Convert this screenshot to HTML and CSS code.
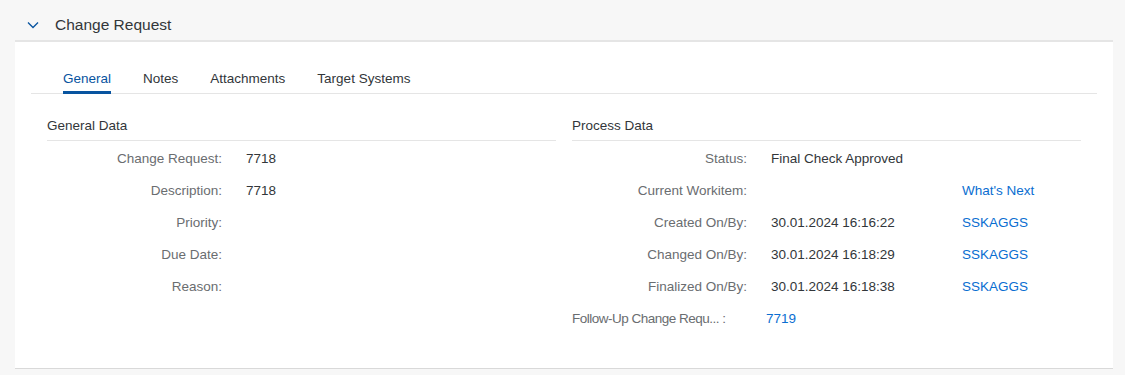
FILE: index.html
```html
<!DOCTYPE html>
<html lang="en">
<head>
    <meta charset="UTF-8">
    <meta name="viewport" content="width=device-width, initial-scale=1.0">
    <title>Change Request</title>
    <link rel="stylesheet" href="styles.css">
</head>
<body>
    <div class="section">
        <div class="section-header">
            <svg class="chevron" width="12" height="8" viewBox="0 0 12 8">
                <path d="M1 1.5 L6 6.5 L11 1.5" fill="none" stroke="#0854a0" stroke-width="1.3"/>
            </svg>
            <span class="section-title">Change Request</span>
        </div>

        <div class="panel">
            <div class="tabs">
                <div class="tab active">General</div>
                <div class="tab">Notes</div>
                <div class="tab">Attachments</div>
                <div class="tab">Target Systems</div>
            </div>

            <div class="columns">
                <div class="group">
                    <div class="group-title">General Data</div>
                    <div class="row">
                        <span class="label">Change Request:</span>
                        <span class="value">7718</span>
                    </div>
                    <div class="row">
                        <span class="label">Description:</span>
                        <span class="value">7718</span>
                    </div>
                    <div class="row">
                        <span class="label">Priority:</span>
                    </div>
                    <div class="row">
                        <span class="label">Due Date:</span>
                    </div>
                    <div class="row">
                        <span class="label">Reason:</span>
                    </div>
                </div>

                <div class="group">
                    <div class="group-title">Process Data</div>
                    <div class="row">
                        <span class="label">Status:</span>
                        <span class="value">Final Check Approved</span>
                    </div>
                    <div class="row">
                        <span class="label">Current Workitem:</span>
                        <span class="value"></span>
                        <a class="link" href="#">What's Next</a>
                    </div>
                    <div class="row">
                        <span class="label">Created On/By:</span>
                        <span class="value">30.01.2024 16:16:22</span>
                        <a class="link" href="#">SSKAGGS</a>
                    </div>
                    <div class="row">
                        <span class="label">Changed On/By:</span>
                        <span class="value">30.01.2024 16:18:29</span>
                        <a class="link" href="#">SSKAGGS</a>
                    </div>
                    <div class="row">
                        <span class="label">Finalized On/By:</span>
                        <span class="value">30.01.2024 16:18:38</span>
                        <a class="link" href="#">SSKAGGS</a>
                    </div>
                    <div class="row">
                        <span class="label label-left">Follow-Up Change Requ... :</span>
                        <a class="link" href="#">7719</a>
                    </div>
                </div>
            </div>
        </div>
    </div>
</body>
</html>
```

FILE: styles.css
```css
body {
    margin: 0;
    background-color: #f7f7f7;
    font-family: "Liberation Sans", Arial, sans-serif;
    font-size: 13.5px;
    color: #32363a;
}

.section {
    padding: 0 12px 0 15px;
}

.section-header {
    display: flex;
    align-items: center;
    height: 30px;
    padding-top: 10px;
}

.chevron {
    margin-left: 12px;
    margin-right: 16px;
}

.section-title {
    font-size: 15.5px;
    color: #32363a;
}

.panel {
    background-color: #fff;
    border-top: 2px solid #e5e5e5;
    border-bottom: 1px solid #d9d9d9;
    height: 326px;
    padding: 0 16px;
}

.tabs {
    display: flex;
    gap: 32px;
    padding-left: 32px;
    border-bottom: 1px solid #e5e5e5;
}

.tab {
    padding-top: 27px;
    padding-bottom: 2px;
    line-height: 20px;
    border-bottom: 3px solid transparent;
    margin-bottom: -1px;
    color: #32363a;
}

.tab.active {
    color: #0854a0;
    border-bottom-color: #0854a0;
}

.columns {
    display: flex;
    gap: 16px;
    padding: 0 16px;
}

.group {
    flex: 1;
}

.group-title {
    padding-top: 22px;
    padding-bottom: 4px;
    line-height: 20px;
    border-bottom: 1px solid #e5e5e5;
}

.row {
    display: flex;
    align-items: center;
    height: 32px;
    padding-top: 1px;
    margin-bottom: -1px;
}

.label {
    width: 175px;
    text-align: right;
    color: #6a6d70;
    flex-shrink: 0;
    white-space: nowrap;
}

.label-left {
    width: 170px;
    text-align: left;
    letter-spacing: -0.5px;
}

.value {
    width: 191px;
    margin-left: 24px;
    flex-shrink: 0;
}

.link {
    color: #0a6ed1;
    text-decoration: none;
}

.label-left + .link {
    margin-left: 24px;
}
```
